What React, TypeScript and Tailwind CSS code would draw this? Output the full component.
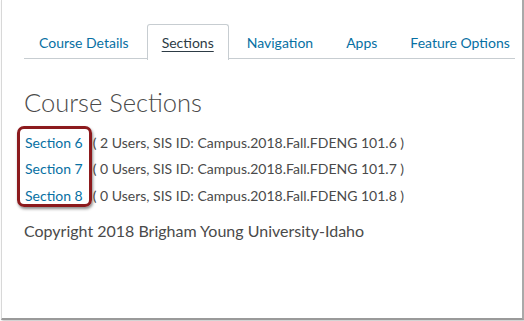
import React from 'react';

const tabs = ['Course Details', 'Sections', 'Navigation', 'Apps', 'Feature Options'];

const sections = [
  { name: 'Section 6', users: 2, sis: 'Campus.2018.Fall.FDENG 101.6' },
  { name: 'Section 7', users: 0, sis: 'Campus.2018.Fall.FDENG 101.7' },
  { name: 'Section 8', users: 0, sis: 'Campus.2018.Fall.FDENG 101.8' },
];

const App: React.FC = () => {
  return (
    <div className="w-[524px] h-[321px] bg-white font-['Lato','Noto_Sans',sans-serif]">
      <div className="w-[523px] h-[320px] ml-px border-l border-r-2 border-b-2 border-l-[#d8d8d8] border-r-[#a9a9a9] border-b-[#9a9a9a] shadow-[1px_1px_2px_rgba(0,0,0,0.25)] pt-[24px] pl-[22px] pr-[6px]">
        {/* Tabs */}
        <ul className="flex gap-[3px] border-b border-[#c7cdd1] h-[35px] w-[491px]">
          {tabs.map((tab) => (
            <li
              key={tab}
              className={`shrink-0 whitespace-nowrap h-[36px] flex items-center text-[14px] rounded-t-[3px] ${
                tab === 'Sections'
                  ? 'bg-white border border-b-0 border-[#c7cdd1] text-[#2d3b45] underline underline-offset-[3px] px-[14px]'
                  : 'text-[#0770a3] px-[15px]'
              }`}
            >
              {tab}
            </li>
          ))}
        </ul>

        {/* Course Sections */}
        <h1 className="mt-[29px] text-[25.5px] leading-[28px] font-light text-[#4a4a4a]">Course Sections</h1>

        <div className="relative mt-[13px] pl-px">
          <div className="absolute left-[-7px] top-[-3px] w-[75px] h-[81px] border-[3px] border-[#8c1a1d] rounded-[7px] shadow-[1px_2px_3px_rgba(0,0,0,0.45)]"></div>
          {sections.map((s) => (
            <div key={s.name} className="flex items-center h-[26.5px] text-[14px] text-[#4a4a4a] whitespace-nowrap">
              <a className="text-[#0770a3] mr-[10px]">{s.name}</a>
              <span>( {s.users} Users, SIS ID: {s.sis} )</span>
            </div>
          ))}
        </div>

        <p className="mt-[11px] text-[16px] leading-[22px] text-[#4a4a4a]">Copyright 2018 Brigham Young University-Idaho</p>
      </div>
    </div>
  );
};

export default App;
